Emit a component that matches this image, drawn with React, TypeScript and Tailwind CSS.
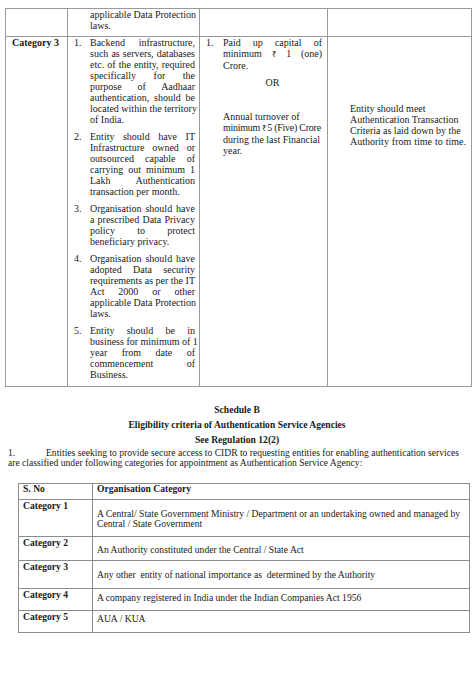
import React from "react";

function JLines({ lines, justifyLast = false }: { lines: string[]; justifyLast?: boolean }) {
  return (
    <>
      {lines.map((l, i) => {
        const isLast = i === lines.length - 1;
        const j = !isLast || justifyLast;
        return (
          <div key={i} className={j ? "text-justify [text-align-last:justify] whitespace-nowrap" : "whitespace-nowrap"}>
            {l}
          </div>
        );
      })}
    </>
  );
}

function Item({ n, lines, first }: { n: string; lines: string[]; first?: boolean }) {
  return (
    <div className={"flex " + (first ? "" : "mt-[6px]")}>
      <div className="w-[16px] shrink-0">{n}</div>
      <div className="w-[105px] shrink-0">
        <JLines lines={lines} />
      </div>
    </div>
  );
}

const items: string[][] = [
  [
    "Backend infrastructure,",
    "such as servers, databases",
    "etc. of the entity, required",
    "specifically for the",
    "purpose of Aadhaar",
    "authentication, should be",
    "located within the territory",
    "of India.",
  ],
  [
    "Entity should have IT",
    "Infrastructure owned or",
    "outsourced capable of",
    "carrying out minimum 1",
    "Lakh Authentication",
    "transaction per month.",
  ],
  ["Organisation should have", "a prescribed Data Privacy", "policy to protect", "beneficiary privacy."],
  [
    "Organisation should have",
    "adopted Data security",
    "requirements as per the IT",
    "Act 2000 or other",
    "applicable Data Protection",
    "laws.",
  ],
  ["Entity should be in", "business for minimum of 1", "year from date of", "commencement of", "Business."],
];

const rows2: { label: string; desc: string[]; pt: string; h: string }[] = [
  {
    label: "Category 1",
    desc: [
      "A Central/ State Government Ministry / Department or an undertaking owned and managed by",
      "Central / State Government",
    ],
    pt: "pt-[9px]",
    h: "h-[37px]",
  },
  { label: "Category 2", desc: ["An Authority constituted under the Central / State Act"], pt: "pt-[8px]", h: "h-[24px]" },
  {
    label: "Category 3",
    desc: ["Any other  entity of national importance as  determined by the Authority"],
    pt: "pt-[9px]",
    h: "h-[28px]",
  },
  { label: "Category 4", desc: ["A company registered in India under the Indian Companies Act 1956"], pt: "pt-[4px]", h: "h-[22px]" },
  { label: "Category 5", desc: ["AUA / KUA"], pt: "pt-[3px]", h: "h-[22px]" },
];

export default function App() {
  return (
    <div className="w-[474px] h-[684px] bg-white text-[#1a1a1a] font-['Liberation_Serif','Times_New_Roman',serif] text-[10px] leading-[11px] overflow-hidden">
      <div className="pt-[8px] pl-[5px]">
        <table className="table-fixed border-collapse w-[466px]">
          <colgroup>
            <col className="w-[62px]" />
            <col className="w-[132px]" />
            <col className="w-[128px]" />
            <col className="w-[144px]" />
          </colgroup>
          <tbody>
            <tr className="h-[28px]">
              <td className="border border-[#9a9a9a] align-top"></td>
              <td className="border border-[#9a9a9a] align-top pl-[22px] pt-0">
                <div className="w-[105px]">
                  <JLines lines={["applicable Data Protection", "laws."]} />
                </div>
              </td>
              <td className="border border-[#9a9a9a] align-top"></td>
              <td className="border border-[#9a9a9a] align-top"></td>
            </tr>
            <tr>
              <td className="border border-[#9a9a9a] align-top pl-[6px] pt-0 font-bold whitespace-nowrap">Category 3</td>
              <td className="border border-[#9a9a9a] align-top pl-[6px] pt-0 pb-[6px]">
                {items.map((lines, i) => (
                  <Item key={i} n={`${i + 1}.`} lines={lines} first={i === 0} />
                ))}
              </td>
              <td className="border border-[#9a9a9a] align-top pl-[6px] pt-0">
                <div className="flex">
                  <div className="w-[17px] shrink-0">1.</div>
                  <div className="w-[99px] shrink-0">
                    <div className="text-justify [text-align-last:justify] whitespace-nowrap">Paid up capital of</div>
                    <div className="text-justify [text-align-last:justify] whitespace-nowrap">
                      minimum <span className="text-[8px]">{"\u20B9"}</span> 1 (one)
                    </div>
                    <div>Crore.</div>
                    <div className="mt-[6px] text-center">OR</div>
                    <div className="mt-[23px] whitespace-nowrap">Annual turnover of</div>
                    <div className="whitespace-nowrap tracking-[-0.25px]">
                      minimum <span className="text-[8px]">{"\u20B9"}</span>5 (Five) Crore
                    </div>
                    <div className="whitespace-nowrap">during the last Financial</div>
                    <div>year.</div>
                  </div>
                </div>
              </td>
              <td className="border border-[#9a9a9a] align-top pl-[22px] pt-[66px]">
                <div className="w-[116px]">
                  <div className="whitespace-nowrap">Entity should meet</div>
                  <div className="whitespace-nowrap">Authentication Transaction</div>
                  <div className="whitespace-nowrap">Criteria as laid down by the</div>
                  <div className="whitespace-nowrap text-justify [text-align-last:justify]">Authority from time to time.</div>
                </div>
              </td>
            </tr>
          </tbody>
        </table>
      </div>

      <div className="text-[9.6px] leading-[10.5px]">
        <div className="mt-[18px] text-center font-bold">
          <div>Schedule B</div>
          <div className="mt-[4.5px]">Eligibility criteria of Authentication Service Agencies</div>
          <div className="mt-[4.5px]">See Regulation 12(2)</div>
        </div>

        <div className="mt-[2px] pl-[8px] pr-[6px]">
          <div className="whitespace-nowrap">
            <span className="inline-block w-[38px]">1.</span>Entities seeking to provide secure access to CIDR to requesting entities for enabling authentication services
          </div>
          <div className="whitespace-nowrap">are classified under following categories for appointment as Authentication Service Agency:</div>
        </div>

        <div className="mt-[14px] pl-[18px]">
          <table className="table-fixed border-collapse w-[451px]">
            <colgroup>
              <col className="w-[74px]" />
              <col className="w-[377px]" />
            </colgroup>
            <tbody>
              <tr className="h-[16px]">
                <td className="border border-[#8c8c8c] align-top pl-[4px] font-bold whitespace-nowrap">S. No</td>
                <td className="border border-[#8c8c8c] align-top pl-[4px] font-bold whitespace-nowrap">Organisation Category</td>
              </tr>
              {rows2.map((r) => (
                <tr key={r.label} className={r.h}>
                  <td className="border border-[#8c8c8c] align-top pl-[4px] pt-[1px] font-bold whitespace-nowrap">{r.label}</td>
                  <td className={"border border-[#8c8c8c] align-top pl-[4px] " + r.pt}>
                    {r.desc.map((d, i) => (
                      <div key={i} className="whitespace-pre">
                        {d}
                      </div>
                    ))}
                  </td>
                </tr>
              ))}
            </tbody>
          </table>
        </div>
      </div>
    </div>
  );
}
